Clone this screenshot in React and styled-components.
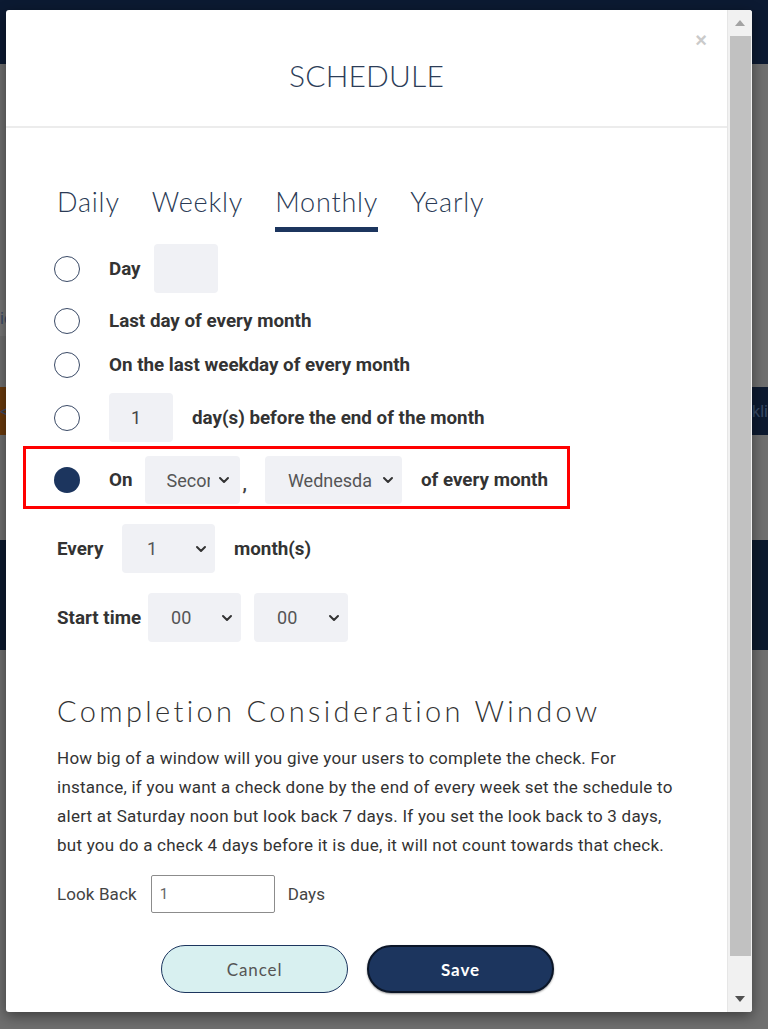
import React from "react";
import styled, { createGlobalStyle } from "styled-components";
import { ChevronDown } from "lucide-react";

const GlobalStyle = createGlobalStyle`
  html, body {
    margin: 0;
    padding: 0;
  }
  body {
    font-family: Roboto, "Liberation Sans", sans-serif;
    background: #6f6f6f;
  }
  * {
    box-sizing: border-box;
  }
`;

const NAVY = "#1c355e";

/* the page that sits behind the dimmed overlay */
const Page = styled.div`
  position: relative;
  height: 1029px;
  overflow: hidden;
  background: #6f6f6f;
  display: flex;
  flex-direction: column;
`;

const TopBar = styled.div`
  height: 64px;
  background: #0c1a32;
  flex-shrink: 0;
`;

const Band = styled.div`
  height: ${(p) => p.$h}px;
  margin-top: ${(p) => p.$mt || 0}px;
  display: flex;
  flex-shrink: 0;
`;

const BandPart = styled.div`
  flex: 1;
  background: ${(p) => p.$bg};
  color: #3a4a66;
  font-size: 16px;
  display: flex;
  align-items: center;
  justify-content: ${(p) => (p.$right ? "flex-end" : "flex-start")};
  overflow: hidden;
`;

/* modal */
const Modal = styled.div`
  position: absolute;
  top: 10px;
  left: 6px;
  width: 746px;
  height: 1002px;
  background: #fff;
  border-radius: 3px;
  box-shadow: 0 4px 14px rgba(0, 0, 0, 0.45);
  display: flex;
  overflow: hidden;
`;

const Body = styled.div`
  flex: 1;
  display: flex;
  flex-direction: column;
  overflow: hidden;
`;

const Header = styled.div`
  position: relative;
  flex-shrink: 0;
  height: 118px;
  border-bottom: 2px solid #ececec;
  display: flex;
  justify-content: center;
  padding-top: 47px;
`;

const Close = styled.span`
  position: absolute;
  top: 19px;
  right: 20px;
  font-family: "Liberation Sans", sans-serif;
  font-size: 20px;
  font-weight: 700;
  color: #cacaca;
`;

const Title = styled.h2`
  margin: 0;
  font-family: Lato, sans-serif;
  font-weight: 300;
  font-size: 30px;
  letter-spacing: 0.2px;
  color: #2c3d58;
  line-height: 36px;
`;

const Content = styled.div`
  padding: 56px 40px 0 51px;
  display: flex;
  flex-direction: column;
  flex-shrink: 0;
`;

const Tabs = styled.div`
  display: flex;
  gap: 32px;
  margin-bottom: 12px;
`;

const Tab = styled.div`
  font-family: Lato, sans-serif;
  font-weight: 300;
  font-size: 27px;
  letter-spacing: 0.8px;
  line-height: 36px;
  color: #2a3a55;
  padding-bottom: 7px;
  border-bottom: 5px solid ${(p) => (p.$active ? NAVY : "transparent")};
`;

const Options = styled.div`
  display: flex;
  flex-direction: column;
  gap: 12px;
`;

const Row = styled.div`
  display: flex;
  align-items: center;
  min-height: 32px;
`;

const Radio = styled.span`
  width: 26px;
  height: 26px;
  border-radius: 50%;
  flex-shrink: 0;
  border: ${(p) => (p.$checked ? "none" : "1.5px solid #3a4a66")};
  background: ${(p) => (p.$checked ? NAVY : "#fff")};
  margin: 0 29px 0 -3px;
`;

const Label = styled.span`
  font-size: 18.8px;
  font-weight: 700;
  color: #333;
  white-space: nowrap;
  margin-right: ${(p) => p.$mr || 0}px;
  min-width: ${(p) => p.$w || 0}px;
`;

const Box = styled.div`
  width: 64px;
  height: 49px;
  border-radius: 4px;
  background: #f0f1f5;
  color: #444;
  font-size: 18px;
  display: flex;
  align-items: center;
  padding-left: 22px;
  margin-right: ${(p) => p.$mr || 0}px;
`;

const SelectBox = styled.div`
  width: ${(p) => p.$w}px;
  height: ${(p) => p.$h || 48}px;
  border-radius: 4px;
  background: #f0f1f5;
  display: flex;
  align-items: center;
  gap: ${(p) => p.$gap || 6}px;
  padding: 0 ${(p) => p.$pr || 6}px 0 ${(p) => p.$pl}px;
  margin-right: ${(p) => p.$mr || 0}px;
  color: #555;
  font-size: 18px;
  flex-shrink: 0;
`;

const SelectValue = styled.span`
  flex: 1;
  min-width: 0;
  overflow: hidden;
  white-space: nowrap;
`;

const Comma = styled.span`
  font-size: 18px;
  font-weight: 700;
  color: #444;
  margin-right: 18px;
  padding-top: 6px;
`;

const Highlight = styled.div`
  margin: -8px 0 0 -34px;
  width: 547px;
  border: 3px solid #ff0000;
  padding: 7px 0 2px 31px;
`;

const Plain = styled.div`
  display: flex;
  align-items: center;
  margin-top: ${(p) => p.$mt}px;
`;

const Heading = styled.h3`
  margin: 50px 0 0;
  font-family: Lato, sans-serif;
  font-weight: 300;
  font-size: 29px;
  letter-spacing: 3.35px;
  line-height: 38px;
  color: #333;
`;

const Para = styled.p`
  margin: 14px 0 0;
  font-size: 17px;
  letter-spacing: 0.25px;
  line-height: 29px;
  color: #333;
  max-width: 624px;
`;

const LookRow = styled.div`
  display: flex;
  align-items: center;
  margin-top: 15px;
  color: #444;
  font-size: 17px;
  letter-spacing: 0.1px;
`;

const LookInput = styled.div`
  width: 124px;
  height: 38px;
  border: 1px solid #8c8c8c;
  border-radius: 2px;
  margin: 0 13px 0 14px;
  padding-left: 8px;
  display: flex;
  align-items: center;
  color: #666;
  font-size: 15px;
`;

const Buttons = styled.div`
  display: flex;
  gap: 19px;
  margin: 32px 0 0 104px;
`;

const Button = styled.button`
  width: 187px;
  height: 48px;
  border-radius: 24px;
  font-family: Lato, sans-serif;
  font-size: 17px;
  letter-spacing: 0.9px;
  cursor: pointer;
  border: ${(p) => (p.$primary ? "2px solid #0b1628" : `1.5px solid ${NAVY}`)};
  background: ${(p) => (p.$primary ? NAVY : "#d8f0f0")};
  color: ${(p) => (p.$primary ? "#fff" : "#555")};
  font-weight: ${(p) => (p.$primary ? 700 : 400)};
  box-shadow: ${(p) => (p.$primary ? "0 1px 2px rgba(0,0,0,0.4)" : "none")};
`;

/* fake classic scrollbar drawn inside the modal */
const Scrollbar = styled.div`
  width: 25px;
  flex-shrink: 0;
  background: #f1f1f1;
  border-left: 1px solid #e6e6e6;
  display: flex;
  flex-direction: column;
  align-items: center;
`;

const Arrow = styled.div`
  height: 26px;
  flex-shrink: 0;
  display: flex;
  align-items: center;
  justify-content: center;
`;

const Thumb = styled.div`
  width: 21px;
  flex: 1;
  background: #c1c1c1;
  margin-bottom: 30px;
`;

const Select = ({ value, ...rest }) => (
  <SelectBox {...rest}>
    <SelectValue>{value}</SelectValue>
    <ChevronDown size={16} strokeWidth={3} color="#333" />
  </SelectBox>
);

const App = () => {
  return (
    <>
      <GlobalStyle />
      <Page>
        <TopBar />
        <Band $h={36} $mt={236}>
          <BandPart $bg="#777">ic</BandPart>
          <BandPart $bg="#6f6f6f" />
        </Band>
        <Band $h={48} $mt={51}>
          <BandPart $bg="#6a3a0c">&lt;</BandPart>
          <BandPart $bg="#0d1a30" $right>
            kli
          </BandPart>
        </Band>
        <Band $h={110} $mt={105}>
          <BandPart $bg="#0c1a2e" />
        </Band>

        <Modal>
          <Body>
            <Header>
              <Close>×</Close>
              <Title>SCHEDULE</Title>
            </Header>
            <Content>
              <Tabs>
                <Tab>Daily</Tab>
                <Tab>Weekly</Tab>
                <Tab $active>Monthly</Tab>
                <Tab>Yearly</Tab>
              </Tabs>

              <Options>
                <Row>
                  <Radio />
                  <Label $mr={13}>Day</Label>
                  <Box />
                </Row>
                <Row>
                  <Radio />
                  <Label>Last day of every month</Label>
                </Row>
                <Row>
                  <Radio />
                  <Label>On the last weekday of every month</Label>
                </Row>
                <Row>
                  <Radio />
                  <Box $mr={19}>1</Box>
                  <Label>day(s) before the end of the month</Label>
                </Row>
                <Highlight>
                  <Row>
                    <Radio $checked />
                    <Label $mr={13}>On</Label>
                    <Select value="Second" $w={95} $pl={21} $pr={8} $mr={2} />
                    <Comma>,</Comma>
                    <Select value="Wednesday" $w={137} $pl={23} $pr={6} $gap={8} $mr={19} />
                    <Label>of every month</Label>
                  </Row>
                </Highlight>
              </Options>

              <Plain $mt={15}>
                <Label $w={65}>Every</Label>
                <Select value="1" $w={93} $h={49} $pl={25} $mr={19} />
                <Label>month(s)</Label>
              </Plain>
              <Plain $mt={20}>
                <Label $mr={7}>Start time</Label>
                <Select value="00" $w={93} $h={49} $pl={23} $mr={13} />
                <Select value="00" $w={94} $h={49} $pl={23} />
              </Plain>

              <Heading>Completion Consideration Window</Heading>
              <Para>
                How big of a window will you give your users to complete the
                check. For instance, if you want a check done by the end of
                every week set the schedule to alert at Saturday noon but look
                back 7 days. If you set the look back to 3 days, but you do a
                check 4 days before it is due, it will not count towards that
                check.
              </Para>

              <LookRow>
                Look Back
                <LookInput>1</LookInput>
                Days
              </LookRow>

              <Buttons>
                <Button>Cancel</Button>
                <Button $primary>Save</Button>
              </Buttons>
            </Content>
          </Body>
          <Scrollbar>
            <Arrow>
              <svg width="10" height="6" viewBox="0 0 10 6">
                <polygon points="0,6 5,0 10,6" fill="#a3a3a3" />
              </svg>
            </Arrow>
            <Thumb />
            <Arrow>
              <svg width="10" height="6" viewBox="0 0 10 6">
                <polygon points="0,0 10,0 5,6" fill="#505050" />
              </svg>
            </Arrow>
          </Scrollbar>
        </Modal>
      </Page>
    </>
  );
};

export default App;
